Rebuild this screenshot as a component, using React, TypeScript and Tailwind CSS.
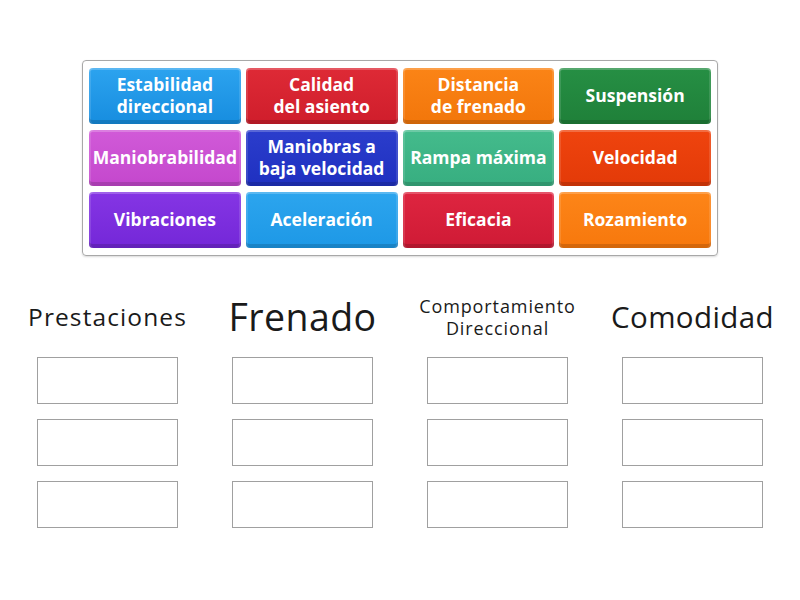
type Tile = { label: string[]; bg: string };

const tiles: Tile[] = [
  { label: ["Estabilidad", "direccional"], bg: "bg-gradient-to-b from-[#2ca3ef] to-[#168ddf]" },
  { label: ["Calidad", "del asiento"], bg: "bg-gradient-to-b from-[#de2a36] to-[#cf1d2b]" },
  { label: ["Distancia", "de frenado"], bg: "bg-gradient-to-b from-[#fb8416] to-[#f2760a]" },
  { label: ["Suspensión"], bg: "bg-gradient-to-b from-[#268f44] to-[#1f8039]" },
  { label: ["Maniobrabilidad"], bg: "bg-gradient-to-b from-[#d15ad8] to-[#c447cd]" },
  { label: ["Maniobras a", "baja velocidad"], bg: "bg-gradient-to-b from-[#2b3dcc] to-[#1f30c0]" },
  { label: ["Rampa máxima"], bg: "bg-gradient-to-b from-[#44bb8c] to-[#37ae80]" },
  { label: ["Velocidad"], bg: "bg-gradient-to-b from-[#ef440e] to-[#e33a08]" },
  { label: ["Vibraciones"], bg: "bg-gradient-to-b from-[#8535e4] to-[#7427d8]" },
  { label: ["Aceleración"], bg: "bg-gradient-to-b from-[#2ca5ee] to-[#1d98e6]" },
  { label: ["Eficacia"], bg: "bg-gradient-to-b from-[#de2540] to-[#cf1a35]" },
  { label: ["Rozamiento"], bg: "bg-gradient-to-b from-[#fd8518] to-[#f7780c]" },
];

const columns = [
  { title: ["Prestaciones"], size: "text-[24.5px] leading-[30px] tracking-[1.1px]" },
  { title: ["Frenado"], size: "text-[37.5px] leading-[44px] tracking-[0.4px]" },
  { title: ["Comportamiento", "Direccional"], size: "text-[18px] leading-[22px] tracking-[0.9px]" },
  { title: ["Comodidad"], size: "text-[29.5px] leading-[36px] tracking-[0.4px]" },
];

export default function App() {
  return (
    <div className="w-[800px] h-[600px] bg-white font-['Open_Sans',sans-serif] overflow-hidden">
      {/* --- Tiles --- */}
      <div className="pt-[60px] flex justify-center">
        <div className="w-[636px] border border-[#a8a8a8] rounded-[4px] px-[6px] py-[7px] grid grid-cols-4 gap-x-[5px] gap-y-[6px] shadow-[0_1px_2px_rgba(0,0,0,0.15)]">
          {tiles.map((t) => (
            <div
              key={t.label.join(" ")}
              className={`${t.bg} h-[56px] rounded-[4px] flex flex-col items-center justify-center text-white font-bold text-[17.5px] leading-[20px] text-center shadow-[inset_0_-4px_0_rgba(0,0,0,0.14),inset_0_2px_0_rgba(255,255,255,0.22),inset_2px_0_0_rgba(255,255,255,0.12),inset_-2px_0_0_rgba(255,255,255,0.12)]`}
            >
              {t.label.map((l) => (
                <span key={l} className="whitespace-nowrap pb-[2px]">{l}</span>
              ))}
            </div>
          ))}
        </div>
      </div>

      {/* --- Drop columns --- */}
      <div className="mt-[31px] mx-auto w-[780px] grid grid-cols-4">
        {columns.map((c) => (
          <div key={c.title.join(" ")} className="flex flex-col items-center">
            <div className={`h-[60px] flex flex-col items-center justify-center text-[#1a1a1a] text-center ${c.size}`}>
              {c.title.map((l) => (
                <span key={l} className="whitespace-nowrap">{l}</span>
              ))}
            </div>
            <div className="mt-[10px] flex flex-col gap-[15px]">
              {[0, 1, 2].map((i) => (
                <div key={i} className="w-[141px] h-[47px] border border-[#a0a0a0] bg-white" />
              ))}
            </div>
          </div>
        ))}
      </div>
    </div>
  );
}
